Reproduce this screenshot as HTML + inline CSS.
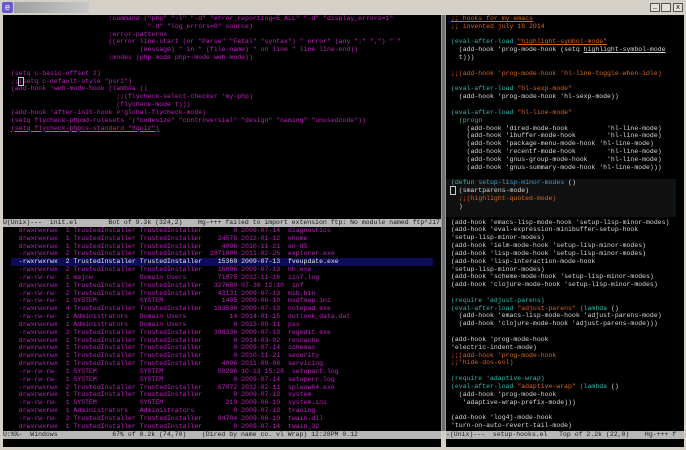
<!DOCTYPE html>
<html><head><meta charset="utf-8"><style>
*{margin:0;padding:0;box-sizing:border-box}
body{width:686px;height:450px;background:#d4d0c8;position:relative;overflow:hidden;font-family:"Liberation Mono",monospace}
pre{position:absolute;font-family:"Liberation Mono",monospace;font-size:6.5px;line-height:7.83px;white-space:pre;color:#c020c0}
.blk{position:absolute;background:#000}
.ml{position:absolute;background:#b8b8b8;color:#1a1a1a;height:8px;font-size:6.5px;line-height:8px;white-space:pre;font-family:"Liberation Mono",monospace}
.o{color:#d8661a}.w{color:#d8d8d8}.c{color:#30b8b0}.b{color:#3a98d8}.u{text-decoration:underline}
.hl{background:#0c0c58;color:#e8e8e8;display:inline-block;width:422px}
</style></head><body>
<!-- title bar -->
<div style="position:absolute;left:0;top:0;width:686px;height:15px;background:#d4d0c8"></div>
<div style="position:absolute;left:14px;top:2px;width:75px;height:11px;background:linear-gradient(90deg,#a0a0a0,#c8c8c8)"></div>
<div style="position:absolute;left:2px;top:2px;width:11px;height:11px;background:#6a5acd;border-radius:2px;color:#fff;font-size:9px;line-height:11px;text-align:center;font-family:'Liberation Sans',sans-serif">e</div>
<div style="position:absolute;left:650px;top:3px;width:10px;height:9px;border:1px solid #555;background:#e4e0d8;font-size:7px;line-height:7px;text-align:center">_</div>
<div style="position:absolute;left:661px;top:3px;width:10px;height:9px;border:1px solid #555;background:#e4e0d8"></div>
<div style="position:absolute;left:673px;top:3px;width:10px;height:9px;border:1px solid #555;background:#e4e0d8;font-size:7px;line-height:8px;text-align:center">x</div>
<!-- main black areas -->
<div class="blk" style="left:3px;top:15px;width:438px;height:432px"></div>
<div style="position:absolute;left:441px;top:15px;width:5px;height:416px;background:#707070;border-left:1px solid #999;border-right:1px solid #999"></div>
<div class="blk" style="left:446px;top:15px;width:238px;height:432px"></div>
<div style="position:absolute;left:446px;top:179px;width:230px;height:38px;background:#111"></div>
<pre style="left:11px;top:15px">                         :command ("php" "-l" "-d" "error_reporting=E_ALL" "-d" "display_errors=1"
                                   "-d" "log_errors=0" source)
                         :error-patterns
                         ((error line-start (or "Parse" "Fatal" "syntax") " error" (any ":" ",") " "
                                 (message) " in " (file-name) " on line " line line-end))
                         :modes (php-mode php+-mode web-mode))

(setq c-basic-offset 2)
;;<span style="outline:1px solid #ccc">(</span>setq c-default-style "psr2")
(add-hook 'web-mode-hook (lambda ()
                           ;;(flycheck-select-checker 'my-php)
                           (flycheck-mode t)))
(add-hook 'after-init-hook #'global-flycheck-mode)
(setq flycheck-phpmd-rulesets '("codesize" "controversial" "design" "naming" "unusedcode"))
<span style="text-decoration:underline;text-decoration-color:#d8661a">(setq flycheck-phpcs-standard "Squiz")</span></pre>
<div class="ml" style="left:3px;top:219px;width:438px">U(Unix)---  init.el        Bot of 9.3k (324,2)    Hg-+++ failed to import extension ftp: No module named ftp^J17</div>
<pre style="left:11px;top:227px">  drwxrwxrwx  1 TrustedInstaller TrustedInstaller        0 2009-07-14  diagnostics
  drwxrwxrwx  1 TrustedInstaller TrustedInstaller    24576 2012-01-12  ehome
  drwxrwxrwx  1 TrustedInstaller TrustedInstaller     4096 2010-11-21  en-US
  -rwxrwxrwx  2 TrustedInstaller TrustedInstaller  2871808 2011-02-25  explorer.exe
<span class="hl">  -rwxrwxrwx  2 TrustedInstaller TrustedInstaller    15360 2009-07-13  fveupdate.exe</span>
  -rwxrwxrwx  2 TrustedInstaller TrustedInstaller    16896 2009-07-13  hh.exe
  -rw-rw-rw-  1 majcw            Domain Users        71875 2012-11-16  iis7.log
  drwxrwxrwx  1 TrustedInstaller TrustedInstaller   327680 07-30 12:10  inf
  -rw-rw-rw-  2 TrustedInstaller TrustedInstaller    43131 2009-07-13  mib.bin
  -rw-rw-rw-  1 SYSTEM           SYSTEM               1405 2009-06-10  msdfmap.ini
  -rwxrwxrwx  4 TrustedInstaller TrustedInstaller   193536 2009-07-13  notepad.exe
  -rw-rw-rw-  1 Administrators   Domain Users           14 2014-01-15  outlook_data.dat
  drwxrwxrwx  1 Administrators   Domain Users            0 2013-09-11  pss
  -rwxrwxrwx  2 TrustedInstaller TrustedInstaller   398336 2009-07-13  regedit.exe
  drwxrwxrwx  1 TrustedInstaller TrustedInstaller        0 2014-03-02  rescache
  drwxrwxrwx  1 TrustedInstaller TrustedInstaller        0 2009-07-14  schemas
  drwxrwxrwx  1 TrustedInstaller TrustedInstaller        0 2010-11-21  security
  drwxrwxrwx  1 TrustedInstaller TrustedInstaller     4096 2011-09-08  servicing
  -rw-rw-rw-  1 SYSTEM           SYSTEM              50286 10-13 15:28  setupact.log
  -rw-rw-rw-  1 SYSTEM           SYSTEM                  0 2009-07-14  setuperr.log
  -rwxrwxrwx  2 TrustedInstaller TrustedInstaller    67072 2012-02-11  splwow64.exe
  drwxrwxrwx  1 TrustedInstaller TrustedInstaller        0 2009-07-13  system
  -rw-rw-rw-  1 SYSTEM           SYSTEM                219 2009-06-10  system.ini
  drwxrwxrwx  1 Administrators   Administrators          0 2009-07-13  tracing
  -rw-rw-rw-  2 TrustedInstaller TrustedInstaller    94784 2009-06-10  twain.dll
  drwxrwxrwx  1 TrustedInstaller TrustedInstaller        0 2009-07-14  twain_32</pre>
<div class="ml" style="left:3px;top:431px;width:438px">U:%%-  Windows              67% of 8.2k (74,70)    (Dired by name co. vl Wrap) 12:28PM 0.12</div>
<pre class="w" style="left:451px;top:15px"><span class="o u">;; hooks for my emacs</span>
<span class="o">;; invented july 16 2014</span>

<span class="c">(eval-after-load </span><span class="o u">"highlight-symbol-mode"</span>
  (add-hook 'prog-mode-hook (setq <span class="u">highlight-symbol-mode</span>
  t)))

<span class="o">;;(add-hook 'prog-mode-hook 'hl-line-toggle-when-idle)</span>

<span class="c">(eval-after-load </span><span class="o">"hl-sexp-mode"</span>
  (add-hook 'prog-mode-hook 'hl-sexp-mode))

<span class="c">(eval-after-load </span><span class="o">"hl-line-mode"</span>
  <span class="c">(progn</span>
    (add-hook 'dired-mode-hook          'hl-line-mode)
    (add-hook 'ibuffer-mode-hook        'hl-line-mode)
    (add-hook 'package-menu-mode-hook 'hl-line-mode)
    (add-hook 'recentf-mode-hook        'hl-line-mode)
    (add-hook 'gnus-group-mode-hook     'hl-line-mode)
    (add-hook 'gnus-summary-mode-hook 'hl-line-mode)))

<span class="c">(defun </span><span class="b">setup-lisp-minor-modes</span> ()
<span style="outline:1px solid #ccc"> </span> (smartparens-mode)
  <span class="o">;;(highlight-quoted-mode)</span>
  )

(add-hook 'emacs-lisp-mode-hook 'setup-lisp-minor-modes)
(add-hook 'eval-expression-minibuffer-setup-hook
'setup-lisp-minor-modes)
(add-hook 'ielm-mode-hook 'setup-lisp-minor-modes)
(add-hook 'lisp-mode-hook 'setup-lisp-minor-modes)
(add-hook 'lisp-interaction-mode-hook
'setup-lisp-minor-modes)
(add-hook 'scheme-mode-hook 'setup-lisp-minor-modes)
(add-hook 'clojure-mode-hook 'setup-lisp-minor-modes)

<span class="c">(require 'adjust-parens)</span>
<span class="c">(eval-after-load </span><span class="o">"adjust-parens"</span> <span class="c">(lambda</span> ()
  (add-hook 'emacs-lisp-mode-hook 'adjust-parens-mode)
  (add-hook 'clojure-mode-hook 'adjust-parens-mode)))

(add-hook 'prog-mode-hook
'electric-indent-mode)
<span class="o">;;(add-hook 'prog-mode-hook</span>
<span class="o">;;'hide-dos-eol)</span>

<span class="c">(require 'adaptive-wrap)</span>
<span class="c">(eval-after-load </span><span class="o">"adaptive-wrap"</span> <span class="c">(lambda</span> ()
  (add-hook 'prog-mode-hook
   'adaptive-wrap-prefix-mode)))

(add-hook 'log4j-mode-hook
'turn-on-auto-revert-tail-mode)</pre>
<div class="ml" style="left:446px;top:431px;width:238px">-(Unix)---  setup-hooks.el   Top of 2.2k (22,0)    Hg-+++ f</div>
<div style="position:absolute;left:0;top:447px;width:686px;height:3px;background:#d4d0c8"></div>
</body></html>
